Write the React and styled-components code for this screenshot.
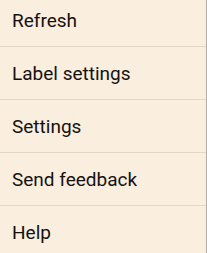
import React from "react";
import styled, { createGlobalStyle } from "styled-components";

const Global = createGlobalStyle`
  html, body { margin: 0; padding: 0; background: #faeedf; overflow: hidden; }
`;

const Menu = styled.div`
  width: 207px;
  box-sizing: border-box;
  background: #faeedf;
  border-right: 1px solid #b3aaa0;
  position: relative;
  overflow: hidden;
  display: flex;
  flex-direction: column;
  margin-top: -6px;
  height: 259px;
`;

const Item = styled.div`
  height: 52px;
  flex: none;
  display: flex;
  align-items: center;
  padding-left: 12px;
  font-family: Roboto, "Noto Sans", sans-serif;
  font-size: 19px;
  color: #141210;
  border-bottom: 1px solid #e3d7c9;
  &:last-child { border-bottom: none; }
`;

const Marker = styled.div`
  position: absolute;
  right: -1px;
  top: 177px;
  width: 1px;
  height: 18px;
  background: #4a4aa8;
`;

const items = ["Refresh", "Label settings", "Settings", "Send feedback", "Help"];

export default function App() {
  return (
    <>
      <Global />
      <Menu>
        {items.map((t) => (
          <Item key={t}>{t}</Item>
        ))}
        <Marker />
      </Menu>
    </>
  );
}
